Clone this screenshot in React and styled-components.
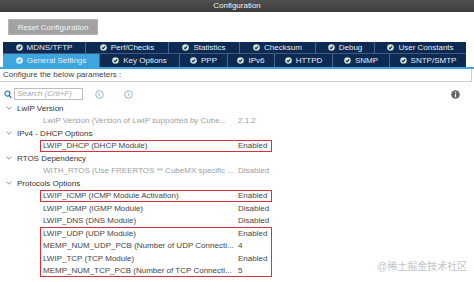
import React from 'react'
import styled, { createGlobalStyle } from 'styled-components'

const GlobalStyle = createGlobalStyle`
  html, body {
    margin: 0;
    padding: 0;
    background: #ffffff;
  }
  body {
    font-family: "Liberation Sans", Arial, sans-serif;
    font-size: 8px;
    color: #3a3a3a;
  }
`

const Window = styled.div`
  position: relative;
  width: 474px;
  height: 282px;
  overflow: hidden;
  background: #ffffff;
`

const TitleBar = styled.div`
  height: 12px;
  line-height: 12px;
  text-align: center;
  color: #f2f2f2;
  background: linear-gradient(#505050, #3c3c3c);
`

const Toolbar = styled.div`
  height: 30px;
  padding: 7px 0 0 8px;
  box-sizing: border-box;
`

const ResetButton = styled.button`
  width: 90px;
  height: 16px;
  padding: 0;
  border: 1px solid #b4b4b4;
  background: #a2a2a2;
  color: #f4f4f4;
  font-family: inherit;
  font-size: 8px;
`

const Tabs = styled.div`
  padding: 0 8px 0 3px;
  border-bottom: 2px solid #3ea6df;
`

const TabRow = styled.div`
  display: flex;
  height: ${p => p.$h}px;
  background: #0c2a52;
  & + & {
    border-top: 1px solid #3f5b80;
  }
`

const Tab = styled.div`
  display: flex;
  align-items: center;
  justify-content: center;
  gap: 4px;
  flex: 0 0 ${p => p.$w}px;
  box-sizing: border-box;
  color: #e6ecf4;
  background: ${p => (p.$active ? '#3ea6df' : '#0c2a52')};
  border-right: 1px solid #4a6589;
  &:last-child {
    border-right: none;
  }
`

const ParamsBar = styled.div`
  height: 13px;
  line-height: 12px;
  margin-right: 2px;
  padding-left: 3px;
  box-sizing: border-box;
  border: 1px solid #cfcfcf;
  border-left: none;
  border-top: none;
  color: #444;
`

const SearchRow = styled.div`
  display: flex;
  align-items: center;
  height: 20px;
  padding: 4px 0 0 4px;
  box-sizing: border-box;
`

const SearchInput = styled.div`
  width: 69px;
  height: 12px;
  margin-left: 2px;
  box-sizing: border-box;
  border: 1px solid #bdbdbd;
  padding-left: 2px;
  line-height: 10px;
  font-style: italic;
  color: #a8a8a8;
`

const NavButton = styled.span`
  display: inline-flex;
  margin-left: ${p => p.$ml}px;
`

const InfoButton = styled.span`
  display: inline-flex;
  margin-left: auto;
  margin-right: 14px;
`

const Tree = styled.div`
  display: flex;
  flex-direction: column;
`

const GroupRow = styled.div`
  display: flex;
  align-items: center;
  height: 12.5px;
  padding-left: 6px;
  gap: 5px;
  color: #333;
`

const BoxedRows = styled.div`
  margin-left: 40px;
  width: 232px;
  outline: ${p => (p.$boxed ? '1.5px solid #d7323b' : 'none')};
  outline-offset: -1px;
`

const ItemRow = styled.div`
  display: flex;
  align-items: center;
  height: 12.5px;
  padding-left: 3px;
  color: ${p => (p.$muted ? '#a0a0a0' : '#454545')};
`

const ItemName = styled.span`
  flex: 0 0 192px;
  white-space: nowrap;
  overflow: hidden;
`

const ItemValue = styled.span`
  margin-left: 3px;
  white-space: nowrap;
`

const Watermark = styled.div`
  position: absolute;
  left: 377px;
  top: 258px;
  font-family: "Liberation Sans", "Noto Sans CJK SC", sans-serif;
  font-size: 10px;
  color: #c4c4c4;
  white-space: nowrap;
`

const CheckIcon = ({ active }) => (
  <svg width="7" height="7" viewBox="0 0 7 7">
    <circle cx="3.5" cy="3.5" r="3.3" fill={active ? '#e8f4fb' : '#d4e2d6'} />
    <polyline
      points="1.9,3.6 3.1,4.7 5.1,2.4"
      fill="none"
      stroke={active ? '#3ea6df' : '#0c2a52'}
      strokeWidth="1.1"
    />
  </svg>
)

const Chevron = () => (
  <svg width="6" height="4" viewBox="0 0 6 4">
    <polyline points="0.5,0.6 3,3.2 5.5,0.6" fill="none" stroke="#8a8a8a" strokeWidth="0.9" />
  </svg>
)

const SearchIcon = () => (
  <svg width="8" height="9" viewBox="0 0 8 9">
    <circle cx="3.4" cy="3.6" r="2.5" fill="none" stroke="#3b7cc4" strokeWidth="1.2" />
    <line x1="5.2" y1="5.5" x2="7.4" y2="8" stroke="#3b7cc4" strokeWidth="1.4" />
  </svg>
)

const CircleArrow = ({ dir }) => (
  <svg width="9" height="9" viewBox="0 0 9 9">
    <circle cx="4.5" cy="4.5" r="3.8" fill="none" stroke="#86acd2" strokeWidth="0.9" />
    <polyline
      points={dir === 'left' ? '5.2,2.8 3.5,4.5 5.2,6.2' : '3.8,2.8 5.5,4.5 3.8,6.2'}
      fill="none"
      stroke="#86acd2"
      strokeWidth="0.9"
    />
  </svg>
)

const InfoIcon = () => (
  <svg width="9" height="9" viewBox="0 0 9 9">
    <circle cx="4.5" cy="4.5" r="4.3" fill="#666" />
    <rect x="4" y="3.8" width="1.1" height="3.4" fill="#fff" />
    <circle cx="4.55" cy="2.4" r="0.7" fill="#fff" />
  </svg>
)

const topTabs = [
  ['MDNS/TFTP', 83],
  ['Perf/Checks', 83],
  ['Statistics', 71],
  ['Checksum', 76],
  ['Debug', 59],
  ['User Constants', 91],
]

const bottomTabs = [
  ['General Settings', 97, true],
  ['Key Options', 80],
  ['PPP', 48],
  ['IPv6', 47],
  ['HTTPD', 58],
  ['SNMP', 57],
  ['SNTP/SMTP', 76],
]

// names are shown as the tool truncates them
const groups = [
  {
    label: 'LwIP Version',
    blocks: [
      { items: [{ name: 'LwIP Version (Version of LwIP supported by Cube...', value: '2.1.2', muted: true }] },
    ],
  },
  {
    label: 'IPv4 - DHCP Options',
    blocks: [{ boxed: true, items: [{ name: 'LWIP_DHCP (DHCP Module)', value: 'Enabled' }] }],
  },
  {
    label: 'RTOS Dependency',
    blocks: [
      { items: [{ name: 'WITH_RTOS (Use FREERTOS ** CubeMX specific ...', value: 'Disabled', muted: true }] },
    ],
  },
  {
    label: 'Protocols Options',
    blocks: [
      { boxed: true, items: [{ name: 'LWIP_ICMP (ICMP Module Activation)', value: 'Enabled' }] },
      {
        items: [
          { name: 'LWIP_IGMP (IGMP Module)', value: 'Disabled' },
          { name: 'LWIP_DNS (DNS Module)', value: 'Disabled' },
        ],
      },
      {
        boxed: true,
        items: [
          { name: 'LWIP_UDP (UDP Module)', value: 'Enabled' },
          { name: 'MEMP_NUM_UDP_PCB (Number of UDP Connecti...', value: '4' },
          { name: 'LWIP_TCP (TCP Module)', value: 'Enabled' },
          { name: 'MEMP_NUM_TCP_PCB (Number of TCP Connecti...', value: '5' },
        ],
      },
    ],
  },
]

const App = () => (
  <Window>
    <GlobalStyle />
    <TitleBar>Configuration</TitleBar>
    <Toolbar>
      <ResetButton>Reset Configuration</ResetButton>
    </Toolbar>
    <Tabs>
      <TabRow $h={11}>
        {topTabs.map(([label, w]) => (
          <Tab key={label} $w={w}>
            <CheckIcon />
            {label}
          </Tab>
        ))}
      </TabRow>
      <TabRow $h={13}>
        {bottomTabs.map(([label, w, active]) => (
          <Tab key={label} $w={w} $active={active}>
            <CheckIcon active={active} />
            {label}
          </Tab>
        ))}
      </TabRow>
    </Tabs>
    <ParamsBar>Configure the below parameters :</ParamsBar>
    <SearchRow>
      <SearchIcon />
      <SearchInput>Search (Crtl+F)</SearchInput>
      <NavButton $ml={12}>
        <CircleArrow dir="left" />
      </NavButton>
      <NavButton $ml={20}>
        <CircleArrow dir="right" />
      </NavButton>
      <InfoButton>
        <InfoIcon />
      </InfoButton>
    </SearchRow>
    <Tree>
      {groups.map(group => (
        <React.Fragment key={group.label}>
          <GroupRow>
            <Chevron />
            {group.label}
          </GroupRow>
          {group.blocks.map((block, i) => (
            <BoxedRows key={i} $boxed={block.boxed}>
              {block.items.map(item => (
                <ItemRow key={item.name} $muted={item.muted}>
                  <ItemName>{item.name}</ItemName>
                  <ItemValue>{item.value}</ItemValue>
                </ItemRow>
              ))}
            </BoxedRows>
          ))}
        </React.Fragment>
      ))}
    </Tree>
    <Watermark>@稀土掘金技术社区</Watermark>
  </Window>
)

export default App
